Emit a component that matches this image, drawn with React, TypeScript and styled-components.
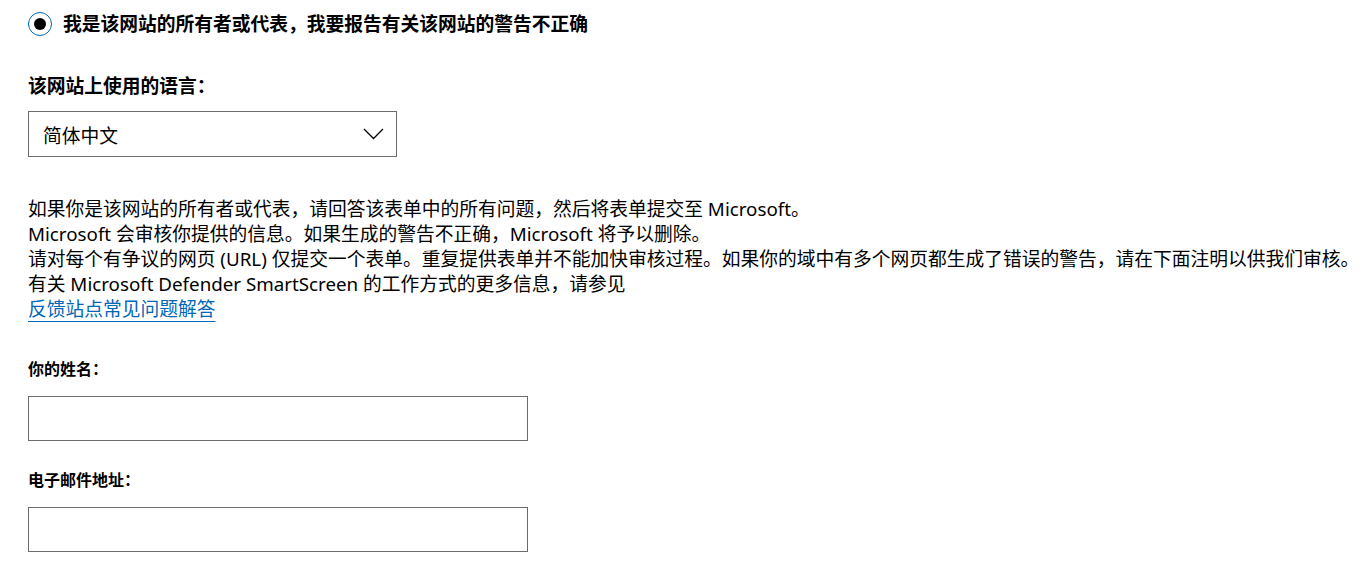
import React from 'react';
import styled, { createGlobalStyle } from 'styled-components';

const GlobalStyle = createGlobalStyle`
  html, body {
    margin: 0;
    padding: 0;
    background: #fff;
  }
  body {
    font-family: "Segoe UI", "Noto Sans", "Noto Sans CJK SC", sans-serif;
    color: #000;
  }
`;

const Page = styled.div`
  display: flex;
  flex-direction: column;
  align-items: flex-start;
  padding: 12px 0 0 28px;
`;

const RadioRow = styled.label`
  display: flex;
  align-items: center;
  gap: 11px;
  height: 24px;
  cursor: pointer;
`;

const RadioCircle = styled.span`
  width: 24px;
  height: 24px;
  box-sizing: border-box;
  border: 1.5px solid #0067b8;
  border-radius: 50%;
  display: flex;
  align-items: center;
  justify-content: center;

  &::after {
    content: '';
    width: 12px;
    height: 12px;
    border-radius: 50%;
    background: #000;
  }
`;

const RadioText = styled.span`
  font-size: 18.75px;
  font-weight: 700;
  line-height: 24px;
`;

const FieldLabel = styled.div<{ $size: number; $top: number }>`
  font-size: ${p => p.$size}px;
  font-weight: 700;
  line-height: 24px;
  margin-top: ${p => p.$top}px;
`;

const Select = styled.div`
  margin-top: 13px;
  width: 369px;
  height: 46px;
  box-sizing: border-box;
  border: 1px solid #6b6b6b;
  display: flex;
  align-items: center;
  justify-content: space-between;
  padding: 0 12px 0 14px;
  font-size: 18.75px;
`;

const Intro = styled.div`
  margin-top: 39px;
  font-size: 18.75px;
  line-height: 25px;
`;

const Line = styled.div`
  white-space: nowrap;
`;

const FaqLink = styled.a`
  color: #0067b8;
  text-decoration: underline;
  text-underline-offset: 5px;
`;

const TextInput = styled.input<{ $top: number }>`
  margin-top: ${p => p.$top}px;
  width: 500px;
  height: 45px;
  box-sizing: border-box;
  border: 1px solid #6b6b6b;
  border-radius: 0;
  padding: 0 10px;
  font-size: 16px;
  outline: none;
`;

const Chevron = () => (
  <svg width="21" height="12" viewBox="0 0 21 12" fill="none">
    <path d="M1 1 L10.5 10.5 L20 1" stroke="#000" strokeWidth="1.3" />
  </svg>
);

export default function App() {
  return (
    <>
      <GlobalStyle />
      <Page>
        <RadioRow>
          <RadioCircle />
          <RadioText>我是该网站的所有者或代表，我要报告有关该网站的警告不正确</RadioText>
        </RadioRow>

        <FieldLabel $size={18.75} $top={38}>该网站上使用的语言：</FieldLabel>
        <Select>
          <span>简体中文</span>
          <Chevron />
        </Select>

        <Intro>
          <Line>如果你是该网站的所有者或代表，请回答该表单中的所有问题，然后将表单提交至 Microsoft。</Line>
          <Line>Microsoft 会审核你提供的信息。如果生成的警告不正确，Microsoft 将予以删除。</Line>
          <Line>请对每个有争议的网页 (URL) 仅提交一个表单。重复提供表单并不能加快审核过程。如果你的域中有多个网页都生成了错误的警告，请在下面注明以供我们审核。</Line>
          <Line>有关 Microsoft Defender SmartScreen 的工作方式的更多信息，请参见</Line>
          <Line><FaqLink href="#">反馈站点常见问题解答</FaqLink></Line>
        </Intro>

        <FieldLabel $size={16} $top={36}>你的姓名：</FieldLabel>
        <TextInput $top={15} />

        <FieldLabel $size={16} $top={27}>电子邮件地址：</FieldLabel>
        <TextInput $top={15} />
      </Page>
    </>
  );
}
